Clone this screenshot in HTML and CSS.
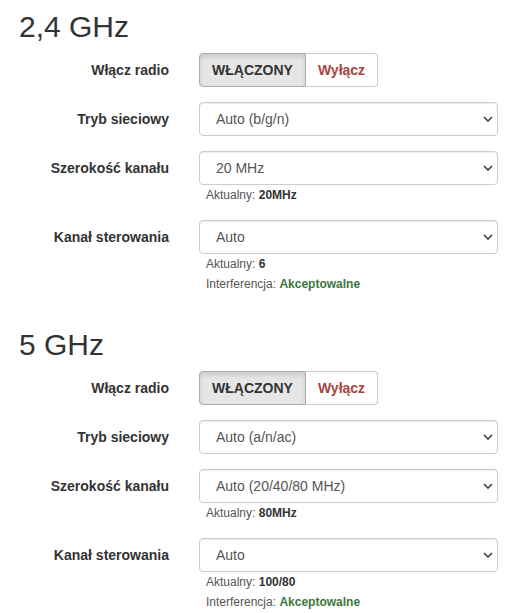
FILE: index.html
```html
<!DOCTYPE html>
<html lang="pl">
<head>
<meta charset="utf-8">
<title>Radio</title>
<link rel="stylesheet" href="styles.css">
</head>
<body>
<div class="page">
  <section class="band">
    <h2 class="band-title">2,4 GHz</h2>
    <div class="form-group">
      <label class="control-label">Włącz radio</label>
      <div class="controls">
        <div class="btn-group">
          <button class="btn btn-active">WŁĄCZONY</button>
          <button class="btn btn-off">Wyłącz</button>
        </div>
      </div>
    </div>
    <div class="form-group">
      <label class="control-label">Tryb sieciowy</label>
      <div class="controls">
        <div class="select"><span>Auto (b/g/n)</span><svg class="chev" width="10" height="6" viewBox="0 0 10 6"><path d="M1 1 L5 5 L9 1" fill="none" stroke="#444" stroke-width="1.7"/></svg></div>
      </div>
    </div>
    <div class="form-group">
      <label class="control-label">Szerokość kanału</label>
      <div class="controls">
        <div class="select"><span>20 MHz</span><svg class="chev" width="10" height="6" viewBox="0 0 10 6"><path d="M1 1 L5 5 L9 1" fill="none" stroke="#444" stroke-width="1.7"/></svg></div>
        <div class="help">Aktualny: <b>20MHz</b></div>
      </div>
    </div>
    <div class="form-group">
      <label class="control-label">Kanał sterowania</label>
      <div class="controls">
        <div class="select"><span>Auto</span><svg class="chev" width="10" height="6" viewBox="0 0 10 6"><path d="M1 1 L5 5 L9 1" fill="none" stroke="#444" stroke-width="1.7"/></svg></div>
        <div class="help">Aktualny: <b>6</b></div>
        <div class="help">Interferencja: <b class="ok">Akceptowalne</b></div>
      </div>
    </div>
  </section>
  <section class="band">
    <h2 class="band-title">5 GHz</h2>
    <div class="form-group">
      <label class="control-label">Włącz radio</label>
      <div class="controls">
        <div class="btn-group">
          <button class="btn btn-active">WŁĄCZONY</button>
          <button class="btn btn-off">Wyłącz</button>
        </div>
      </div>
    </div>
    <div class="form-group">
      <label class="control-label">Tryb sieciowy</label>
      <div class="controls">
        <div class="select"><span>Auto (a/n/ac)</span><svg class="chev" width="10" height="6" viewBox="0 0 10 6"><path d="M1 1 L5 5 L9 1" fill="none" stroke="#444" stroke-width="1.7"/></svg></div>
      </div>
    </div>
    <div class="form-group">
      <label class="control-label">Szerokość kanału</label>
      <div class="controls">
        <div class="select"><span>Auto (20/40/80 MHz)</span><svg class="chev" width="10" height="6" viewBox="0 0 10 6"><path d="M1 1 L5 5 L9 1" fill="none" stroke="#444" stroke-width="1.7"/></svg></div>
        <div class="help">Aktualny: <b>80MHz</b></div>
      </div>
    </div>
    <div class="form-group">
      <label class="control-label">Kanał sterowania</label>
      <div class="controls">
        <div class="select"><span>Auto</span><svg class="chev" width="10" height="6" viewBox="0 0 10 6"><path d="M1 1 L5 5 L9 1" fill="none" stroke="#444" stroke-width="1.7"/></svg></div>
        <div class="help">Aktualny: <b>100/80</b></div>
        <div class="help">Interferencja: <b class="ok">Akceptowalne</b></div>
      </div>
    </div>
  </section>
</div>
</body>
</html>
```
FILE: styles.css
```css
html, body {
  margin: 0;
  padding: 0;
  background: #fff;
}
body {
  font-family: "Liberation Sans", Arial, sans-serif;
  font-size: 14px;
  line-height: 20px;
  color: #333;
  overflow: hidden;
}
.page {
  padding: 10px 9px 0 19px;
}
.band-title {
  margin: 34px 0 10px;
  font-size: 30px;
  line-height: 33px;
  font-weight: normal;
  color: #333;
}
.band:first-child .band-title {
  margin-top: 0;
}
.form-group {
  display: grid;
  grid-template-columns: 150px 299px;
  column-gap: 30px;
  margin-bottom: 15px;
}
.control-label {
  text-align: right;
  font-weight: bold;
  line-height: 34px;
  white-space: nowrap;
}
.btn-group {
  display: flex;
}
.btn {
  font-family: inherit;
  font-size: 14px;
  font-weight: bold;
  line-height: 20px;
  height: 34px;
  padding: 6px 12px;
  margin: 0;
  border: 1px solid #ccc;
  background: #fff;
  color: #333;
}
.btn-active {
  background: #e6e6e6;
  border-color: #adadad;
  border-radius: 4px 0 0 4px;
  box-shadow: inset 0 3px 5px rgba(0, 0, 0, 0.125);
}
.btn-off {
  color: #a94442;
  border-left: 0;
  border-radius: 0 4px 4px 0;
}
.select {
  display: flex;
  align-items: center;
  justify-content: space-between;
  height: 34px;
  box-sizing: border-box;
  padding: 0 4px 0 16px;
  border: 1px solid #ccc;
  border-radius: 4px;
  box-shadow: inset 0 1px 1px rgba(0, 0, 0, 0.075);
  color: #555;
  font-size: 14px;
}
.chev {
  display: block;
}
.help {
  font-size: 12px;
  line-height: 20px;
  padding-left: 7px;
  color: #555;
}
.help b {
  color: #333;
}
.help b.ok {
  color: #3c763d;
}
```
